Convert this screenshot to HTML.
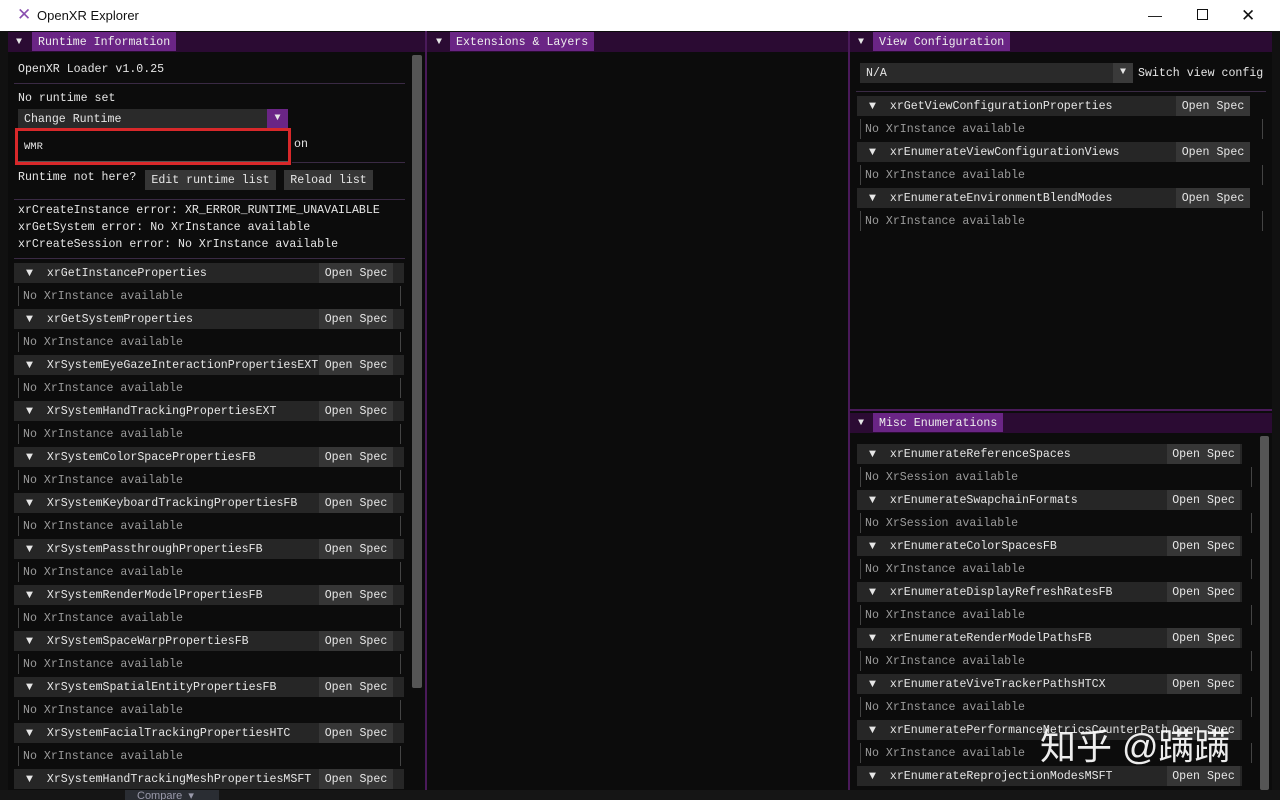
<!DOCTYPE html><html><head><style>
body{margin:0;width:1280px;height:800px;background:#0c0c0c;position:relative;overflow:hidden;font-family:"Liberation Mono",monospace;font-size:11.6px;color:#e6e6e6}
div,span{position:absolute;box-sizing:border-box;white-space:pre}
.t{line-height:22px}
.hb{background:#2b0b33;height:20px}
.tab{background:#6a2585;height:19px;line-height:21px;padding:0 6px;color:#eee}
.h{background:#262626;height:20px;line-height:22px}
.b{background:#363636;height:20px;line-height:22px;text-align:center}
.c{height:20px;line-height:22px;color:#9b9b9b;border-left:1px solid #444;border-right:1px solid #444;padding-left:4px}
.sep{height:1px;background:#3a2a44}
</style></head><body>
<div style="left:0;top:0;width:1280px;height:31px;background:#fff;font-family:'Liberation Sans',sans-serif;font-size:13px;color:#111;line-height:31px;padding-left:37px">OpenXR Explorer</div>
<div style="left:17px;top:6px;color:#8a4fb0;font-family:'Liberation Sans';font-size:17px;line-height:18px">✕</div>
<div style="left:1148px;top:0;font-family:'Liberation Sans';font-size:14px;line-height:31px;color:#111">—</div>
<div style="left:1197px;top:9px;width:11px;height:11px;border:1px solid #111"></div>
<div style="left:1241px;top:0;font-family:'Liberation Sans';font-size:17px;line-height:31px;color:#111">✕</div>
<div style="left:0;top:31px;width:8px;height:769px;background:#111"></div>
<div style="left:1272px;top:31px;width:8px;height:769px;background:#111"></div>
<div style="left:425px;top:31px;width:2px;height:769px;background:#4a1a5a"></div>
<div style="left:848px;top:31px;width:2px;height:769px;background:#4a1a5a"></div>
<div style="left:850px;top:409px;width:422px;height:2px;background:#4a1a5a"></div>
<div class="hb" style="left:8px;top:32px;width:417px"></div>
<div class="hb" style="left:427px;top:32px;width:421px"></div>
<div class="hb" style="left:850px;top:32px;width:422px"></div>
<div class="hb" style="left:850px;top:413px;width:422px"></div>
<div class="t" style="left:16px;top:32px;font-size:10px">▼</div><div class="tab" style="left:32px;top:32px">Runtime Information</div>
<div class="t" style="left:436px;top:32px;font-size:10px">▼</div><div class="tab" style="left:450px;top:32px">Extensions &amp; Layers</div>
<div class="t" style="left:858px;top:32px;font-size:10px">▼</div><div class="tab" style="left:873px;top:32px">View Configuration</div>
<div class="t" style="left:858px;top:413px;font-size:10px">▼</div><div class="tab" style="left:873px;top:413px">Misc Enumerations</div>
<div class="t" style="left:18px;top:59px">OpenXR Loader v1.0.25</div>
<div class="sep" style="left:14px;top:83px;width:391px"></div>
<div class="t" style="left:18px;top:88px">No runtime set</div>
<div style="left:18px;top:109px;width:270px;height:20px;background:#2a2a2a"></div>
<div class="t" style="left:24px;top:109px">Change Runtime</div>
<div style="left:267px;top:109px;width:21px;height:20px;background:#6a2585;text-align:center;line-height:20px;font-size:10px">▼</div>
<div style="left:15px;top:128px;width:276px;height:37px;border:3px solid #d8282a;background:#0c0c0c"></div>
<div style="left:18px;top:131px;width:270px;height:31px;border-bottom:1px solid #555"></div>
<div class="t" style="left:24px;top:136px;font-size:10.5px">WMR</div>
<div class="t" style="left:294px;top:134px">on</div>
<div class="sep" style="left:292px;top:162px;width:113px"></div>
<div class="t" style="left:18px;top:167px">Runtime not here?</div>
<div class="b" style="left:145px;top:170px;width:131px">Edit runtime list</div>
<div class="b" style="left:284px;top:170px;width:89px">Reload list</div>
<div class="sep" style="left:14px;top:199px;width:391px"></div>
<div class="t" style="left:18px;top:200px">xrCreateInstance error: XR_ERROR_RUNTIME_UNAVAILABLE</div>
<div class="t" style="left:18px;top:217px">xrGetSystem error: No XrInstance available</div>
<div class="t" style="left:18px;top:234px">xrCreateSession error: No XrInstance available</div>
<div class="sep" style="left:14px;top:258px;width:391px"></div>
<div style="left:412px;top:55px;width:10px;height:633px;background:#555;border-radius:2px"></div>
<div class="h" style="left:14px;top:263px;width:390px;padding-left:12px">▼  xrGetInstanceProperties</div><div class="b" style="left:319px;top:263px;width:74px">Open Spec</div><div class="c" style="left:18px;top:286px;width:383px">No XrInstance available</div>
<div class="h" style="left:14px;top:309px;width:390px;padding-left:12px">▼  xrGetSystemProperties</div><div class="b" style="left:319px;top:309px;width:74px">Open Spec</div><div class="c" style="left:18px;top:332px;width:383px">No XrInstance available</div>
<div class="h" style="left:14px;top:355px;width:390px;padding-left:12px;overflow:hidden">▼  XrSystemEyeGazeInteractionPropertiesEXT</div><div class="b" style="left:319px;top:355px;width:74px">Open Spec</div><div class="c" style="left:18px;top:378px;width:383px">No XrInstance available</div>
<div class="h" style="left:14px;top:401px;width:390px;padding-left:12px">▼  XrSystemHandTrackingPropertiesEXT</div><div class="b" style="left:319px;top:401px;width:74px">Open Spec</div><div class="c" style="left:18px;top:424px;width:383px">No XrInstance available</div>
<div class="h" style="left:14px;top:447px;width:390px;padding-left:12px">▼  XrSystemColorSpacePropertiesFB</div><div class="b" style="left:319px;top:447px;width:74px">Open Spec</div><div class="c" style="left:18px;top:470px;width:383px">No XrInstance available</div>
<div class="h" style="left:14px;top:493px;width:390px;padding-left:12px">▼  XrSystemKeyboardTrackingPropertiesFB</div><div class="b" style="left:319px;top:493px;width:74px">Open Spec</div><div class="c" style="left:18px;top:516px;width:383px">No XrInstance available</div>
<div class="h" style="left:14px;top:539px;width:390px;padding-left:12px">▼  XrSystemPassthroughPropertiesFB</div><div class="b" style="left:319px;top:539px;width:74px">Open Spec</div><div class="c" style="left:18px;top:562px;width:383px">No XrInstance available</div>
<div class="h" style="left:14px;top:585px;width:390px;padding-left:12px">▼  XrSystemRenderModelPropertiesFB</div><div class="b" style="left:319px;top:585px;width:74px">Open Spec</div><div class="c" style="left:18px;top:608px;width:383px">No XrInstance available</div>
<div class="h" style="left:14px;top:631px;width:390px;padding-left:12px">▼  XrSystemSpaceWarpPropertiesFB</div><div class="b" style="left:319px;top:631px;width:74px">Open Spec</div><div class="c" style="left:18px;top:654px;width:383px">No XrInstance available</div>
<div class="h" style="left:14px;top:677px;width:390px;padding-left:12px">▼  XrSystemSpatialEntityPropertiesFB</div><div class="b" style="left:319px;top:677px;width:74px">Open Spec</div><div class="c" style="left:18px;top:700px;width:383px">No XrInstance available</div>
<div class="h" style="left:14px;top:723px;width:390px;padding-left:12px">▼  XrSystemFacialTrackingPropertiesHTC</div><div class="b" style="left:319px;top:723px;width:74px">Open Spec</div><div class="c" style="left:18px;top:746px;width:383px">No XrInstance available</div>
<div class="h" style="left:14px;top:769px;width:390px;padding-left:12px">▼  XrSystemHandTrackingMeshPropertiesMSFT</div><div class="b" style="left:319px;top:769px;width:74px">Open Spec</div>
<div style="left:0;top:790px;width:1280px;height:10px;background:#151515"></div>
<div style="left:125px;top:790px;width:94px;height:10px;background:#2a2d33;color:#99a;font-family:'Liberation Sans';font-size:11px;line-height:12px;padding-left:12px;overflow:hidden">Compare  ▾</div>
<div style="left:860px;top:63px;width:273px;height:20px;background:#2a2a2a"></div>
<div class="t" style="left:866px;top:63px">N/A</div>
<div style="left:1113px;top:63px;width:20px;height:20px;background:#3a3a3a;text-align:center;line-height:20px;font-size:10px">▼</div>
<div class="t" style="left:1138px;top:63px">Switch view config</div>
<div class="sep" style="left:856px;top:91px;width:410px"></div>
<div class="h" style="left:857px;top:96px;width:393px;padding-left:12px">▼  xrGetViewConfigurationProperties</div><div class="b" style="left:1176px;top:96px;width:74px">Open Spec</div><div class="c" style="left:860px;top:119px;width:403px">No XrInstance available</div>
<div class="h" style="left:857px;top:142px;width:393px;padding-left:12px">▼  xrEnumerateViewConfigurationViews</div><div class="b" style="left:1176px;top:142px;width:74px">Open Spec</div><div class="c" style="left:860px;top:165px;width:403px">No XrInstance available</div>
<div class="h" style="left:857px;top:188px;width:393px;padding-left:12px">▼  xrEnumerateEnvironmentBlendModes</div><div class="b" style="left:1176px;top:188px;width:74px">Open Spec</div><div class="c" style="left:860px;top:211px;width:403px">No XrInstance available</div>
<div style="left:1260px;top:436px;width:9px;height:354px;background:#555;border-radius:2px"></div>
<div class="h" style="left:857px;top:444px;width:385px;padding-left:12px">▼  xrEnumerateReferenceSpaces</div><div class="b" style="left:1167px;top:444px;width:73px">Open Spec</div><div class="c" style="left:860px;top:467px;width:392px">No XrSession available</div>
<div class="h" style="left:857px;top:490px;width:385px;padding-left:12px">▼  xrEnumerateSwapchainFormats</div><div class="b" style="left:1167px;top:490px;width:73px">Open Spec</div><div class="c" style="left:860px;top:513px;width:392px">No XrSession available</div>
<div class="h" style="left:857px;top:536px;width:385px;padding-left:12px">▼  xrEnumerateColorSpacesFB</div><div class="b" style="left:1167px;top:536px;width:73px">Open Spec</div><div class="c" style="left:860px;top:559px;width:392px">No XrInstance available</div>
<div class="h" style="left:857px;top:582px;width:385px;padding-left:12px">▼  xrEnumerateDisplayRefreshRatesFB</div><div class="b" style="left:1167px;top:582px;width:73px">Open Spec</div><div class="c" style="left:860px;top:605px;width:392px">No XrInstance available</div>
<div class="h" style="left:857px;top:628px;width:385px;padding-left:12px">▼  xrEnumerateRenderModelPathsFB</div><div class="b" style="left:1167px;top:628px;width:73px">Open Spec</div><div class="c" style="left:860px;top:651px;width:392px">No XrInstance available</div>
<div class="h" style="left:857px;top:674px;width:385px;padding-left:12px">▼  xrEnumerateViveTrackerPathsHTCX</div><div class="b" style="left:1167px;top:674px;width:73px">Open Spec</div><div class="c" style="left:860px;top:697px;width:392px">No XrInstance available</div>
<div class="h" style="left:857px;top:720px;width:385px;padding-left:12px;overflow:hidden">▼  xrEnumeratePerformanceMetricsCounterPathsMETA</div><div class="b" style="left:1167px;top:720px;width:73px">Open Spec</div><div class="c" style="left:860px;top:743px;width:392px">No XrInstance available</div>
<div class="h" style="left:857px;top:766px;width:385px;padding-left:12px">▼  xrEnumerateReprojectionModesMSFT</div><div class="b" style="left:1167px;top:766px;width:73px">Open Spec</div>
<div style="left:1040px;top:722px;font-family:'Liberation Sans','Noto Sans CJK SC',sans-serif;font-size:36px;line-height:50px;color:#fff;opacity:.92">知乎 @蹒蹒</div>
</body></html>
